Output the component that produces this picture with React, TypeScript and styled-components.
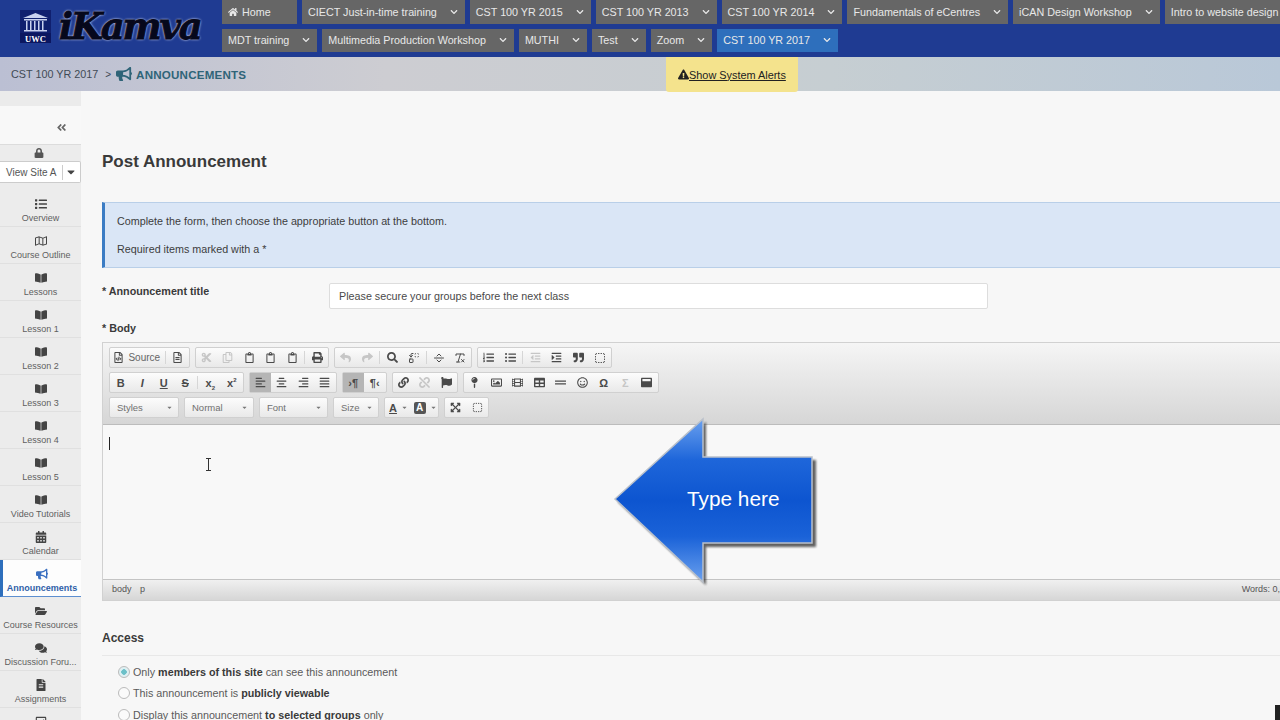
import React from 'react';
import styled, { createGlobalStyle } from 'styled-components';
import {
  FaAlignCenter, FaAlignJustify, FaAlignLeft, FaAlignRight, FaAngleDoubleLeft, FaBookOpen, FaBullhorn,
  FaCalendarAlt, FaCaretDown, FaChevronDown, FaComments, FaExclamationTriangle, FaExpandArrowsAlt, FaFileAlt,
  FaFilm, FaFlag, FaFolderOpen, FaHome, FaLink, FaList, FaListOl, FaListUl, FaLock, FaMapPin, FaOutdent, FaIndent,
  FaPrint, FaQuoteRight, FaRegCheckSquare, FaRegClipboard, FaRegCopy, FaRegFileAlt, FaRegFileCode, FaRegImage, FaRegMap, FaRegSmile,
  FaReply, FaSearch, FaShare, FaCut, FaTable, FaUnlink, FaGripLines, FaWindowMaximize,
} from 'react-icons/fa';
import { Replace, RemoveFormatting, SeparatorHorizontal, SquareDashed } from 'lucide-react';

const GlobalStyle = createGlobalStyle`
  html, body {
    margin: 0;
    height: 720px;
    overflow: hidden;
    background: #f7f7f7;
    font-family: "Liberation Sans", Arial, sans-serif;
    color: #333;
  }
  * { box-sizing: border-box; }
`;

const Page = styled.div`
  position: relative;
  width: 1280px;
  height: 720px;
  overflow: hidden;
`;

/* header */
const Header = styled.header`
  display: flex;
  height: 57px;
  background: #1f3b92;
`;

const Logo = styled.div`
  display: flex;
  align-items: flex-start;
  flex: 0 0 222px;
  padding: 10px 0 0 20px;
`;

const LogoText = styled.span`
  margin: -6px 0 0 8px;
  font: italic 700 37px/44px "DejaVu Serif", serif;
  letter-spacing: -2.2px;
  color: #06081c;
  -webkit-text-stroke: 1px #06081c;
  text-shadow: 0 0 2px #fff, 0 0 3px #cfd8ff;
`;

const Tabs = styled.nav`
  display: flex;
  flex-direction: column;
  gap: 5px;
  min-width: 0;
  flex: 1;
  overflow: hidden;
`;

const TabRow = styled.div<{ $h: number }>`
  display: flex;
  gap: 5px;
  height: ${(p) => p.$h}px;
`;

const Tab = styled.a<{ $active?: boolean; $wide?: number }>`
  display: flex;
  align-items: center;
  flex: 0 0 auto;
  height: 100%;
  padding: 0 6px 1px;
  min-width: ${(p) => p.$wide ?? 0}px;
  background: ${(p) => (p.$active ? '#2e6fbc' : '#666')};
  color: #e8e8e8;
  font-size: 10.75px;
  white-space: nowrap;

  svg.home {
    margin: 0 4px 0 0;
    font-size: 10px;
  }
  svg.chev {
    margin: 0 1px 0 13px;
    font-size: 8px;
  }
`;

/* breadcrumb */
const Crumbs = styled.div`
  position: relative;
  display: flex;
  align-items: center;
  height: 34px;
  padding-left: 11px;
  background: linear-gradient(90deg, #bbbfd3 0%, #cdcdd2 30%, #c6ced2 65%, #b9c8d8 100%);
  font-size: 10.8px;
  color: #3f4a55;
`;

const CrumbSep = styled.span`
  margin: 0 5px 0 7px;
  font-size: 10px;
`;

const CrumbCurrent = styled.span`
  display: flex;
  align-items: center;
  gap: 4px;
  font-weight: 700;
  font-size: 11.6px;
  letter-spacing: 0.2px;
  color: #2f6478;
  svg { font-size: 16px; }
`;

const AlertTab = styled.a`
  position: absolute;
  left: 666px;
  top: 0;
  display: flex;
  align-items: center;
  width: 132px;
  height: 35px;
  padding-left: 12px;
  background: #f4e38d;
  border-radius: 0 0 3px 3px;
  color: #222;
  font-size: 10.9px;
  text-decoration: underline;
  svg { font-size: 11px; }
`;

/* body */
const Body = styled.div`
  display: flex;
  height: 629px;
`;

const Sidebar = styled.aside`
  flex: 0 0 81px;
  background: #ececec;
  overflow: hidden;
`;

const SideTop = styled.div`
  height: 15px;
  background: #ebebeb;
`;

const Collapse = styled.div`
  display: flex;
  align-items: center;
  justify-content: flex-end;
  height: 39px;
  padding: 4px 14px 0 0;
  background: #f8f8f8;
  border-bottom: 1px solid #dcdcdc;
  color: #666;
  font-size: 11px;
`;

const LockRow = styled.div`
  display: flex;
  justify-content: center;
  padding: 3px 4px 0 0;
  height: 16px;
  color: #555;
  font-size: 10px;
`;

const ViewAs = styled.div`
  display: flex;
  align-items: center;
  height: 22px;
  margin-bottom: 7px;
  padding-left: 6px;
  background: #fff;
  border: 1px solid #ccc;
  border-left: 0;
  border-radius: 0 2px 2px 0;
  font-size: 10px;
  color: #555;
  white-space: nowrap;
`;

const ViewCaret = styled.span`
  display: flex;
  align-items: center;
  justify-content: center;
  width: 17px;
  height: 15px;
  margin-left: 6px;
  border-left: 1px solid #ccc;
  color: #444;
  font-size: 12px;
`;

const SideItem = styled.a<{ $active?: boolean }>`
  display: flex;
  flex-direction: column;
  align-items: center;
  height: 37px;
  padding-top: 8px;
  background: ${(p) => (p.$active ? '#fdfdfd' : 'transparent')};
  border-left: ${(p) => (p.$active ? '3px solid #2e6fbc' : '0')};
  border-bottom: 1px solid ${(p) => (p.$active ? '#5d8fd0' : '#e0e0e0')};
  color: ${(p) => (p.$active ? '#2f5fa8' : '#5f5f5f')};
  font-size: 9px;
  font-weight: ${(p) => (p.$active ? 700 : 400)};
  white-space: nowrap;

  svg {
    font-size: 12px;
    height: 12px;
    color: ${(p) => (p.$active ? '#3a6fc0' : '#444')};
    margin-bottom: 3px;
  }
`;

const Main = styled.main`
  flex: 1;
  min-width: 0;
  padding: 61px 0 0 21px;
  background: #f7f7f7;
`;

const Title = styled.h1`
  margin: 0 0 30px;
  font-size: 17px;
  line-height: 20px;
  font-weight: 700;
  color: #3a3a3a;
`;

const Notice = styled.div`
  height: 66px;
  margin-bottom: 15px;
  padding: 12px 0 0 12px;
  background: #dae6f6;
  border: 1px solid #b9cfe8;
  border-left: 3px solid #3b7cc4;
  border-right: 0;
  font-size: 10.75px;
  color: #3d3d3d;

  p {
    margin: 0 0 15px;
    line-height: 13px;
  }
`;

const FieldRow = styled.div`
  display: flex;
  align-items: flex-start;
  height: 26px;
`;

const Label = styled.label`
  flex: 0 0 227px;
  padding-top: 2px;
  font-size: 10.75px;
  font-weight: 700;
  color: #3a3a3a;
`;

const TextInput = styled.div`
  width: 659px;
  height: 26px;
  padding: 0 9px;
  background: #fff;
  border: 1px solid #ddd;
  border-radius: 2px;
  font-size: 10.75px;
  line-height: 25px;
  color: #4a4a4a;
`;

const BodyLabel = styled(Label)`
  display: block;
  height: 33px;
  padding-top: 13px;
`;

const Editor = styled.div`
  border: 1px solid #d1d1d1;
  border-right: 0;
  background: #f8f8f8;
`;

const Toolbar = styled.div`
  height: 82px;
  padding: 4px 0 0 6px;
  background: linear-gradient(#f5f5f5, #d6d6d6);
  border-bottom: 1px solid #bcbcbc;
`;

const ToolRow = styled.div`
  display: flex;
  gap: 5px;
  height: 21px;
  margin-bottom: 4px;
`;

const ToolGroup = styled.div`
  display: flex;
  align-items: stretch;
  background: linear-gradient(#fcfcfc, #e9e9e9);
  border: 1px solid #d0d0d0;
  border-radius: 2px;
`;

const ToolBtn = styled.span<{ $on?: boolean; $off?: boolean; $w?: number }>`
  display: flex;
  align-items: center;
  justify-content: center;
  width: ${(p) => p.$w ?? 21.5}px;
  gap: 4px;
  background: ${(p) => (p.$on ? '#b5b5b5' : 'transparent')};
  color: ${(p) => (p.$off ? '#c6c6c6' : '#4a4a4a')};
  font-size: 11px;
  font-family: "Liberation Sans", Arial, sans-serif;

  sub, sup { font-size: 6px; line-height: 0; }
`;

const BtnLabel = styled.span`
  font-size: 10px;
  color: #666;
`;

const BtnCaret = styled.span`
  display: flex;
  font-size: 7px;
  color: #777;
`;

const HighlightA = styled.b`
  display: flex;
  align-items: center;
  justify-content: center;
  width: 12px;
  height: 12px;
  border-radius: 2px;
  background: #555;
  color: #fff;
  font-size: 10px;
`;

const ToolSep = styled.span`
  width: 1px;
  margin: 3px 1.25px;
  background: #d6d6d6;
`;

const Combo = styled.span<{ $w: number }>`
  display: flex;
  align-items: center;
  justify-content: space-between;
  width: ${(p) => p.$w}px;
  padding: 0 5px 0 7px;
  color: #707070;
  font-size: 9.5px;

  svg { font-size: 7px; color: #777; }
`;

const EditArea = styled.div`
  height: 154px;
  padding: 12px 6px;
  background: #f8f8f8;
`;

const Caret = styled.div`
  width: 1px;
  height: 13px;
  background: #222;
`;

const StatusBar = styled.div`
  display: flex;
  align-items: center;
  justify-content: space-between;
  height: 21px;
  padding: 0 0 2px 9px;
  background: linear-gradient(#f0f0f0, #d6d6d6);
  border-top: 1px solid #c4c4c4;
  font-size: 9px;
  color: #555;
`;

const Path = styled.span`
  word-spacing: 6px;
`;

const SectionHead = styled.h2`
  margin: 30px 0 0;
  padding: 0 0 10px;
  font-size: 12px;
  line-height: 14px;
  font-weight: 700;
  color: #3a3a3a;
  border-bottom: 1px solid #e8e8e8;
`;

const Choices = styled.div`
  display: flex;
  flex-direction: column;
  gap: 8.5px;
  padding: 9px 0 0 16px;
`;

const Choice = styled.div`
  display: flex;
  align-items: center;
  gap: 3px;
  height: 13px;
  font-size: 10.75px;
  color: #5a5a5a;

  b { color: #3a3a3a; }
`;

const Radio = styled.span<{ $on?: boolean }>`
  width: 12px;
  height: 12px;
  border-radius: 50%;
  border: 1px solid #bbb;
  background: ${(p) => (p.$on ? 'radial-gradient(#6cc0c8 0 2.5px, #dff0f3 3px)' : '#fafafa')};
`;

/* things over the page */
const Callout = styled.div`
  position: absolute;
  left: 610px;
  top: 414px;
  width: 212px;
  height: 176px;
`;

const CalloutText = styled.span`
  position: absolute;
  left: 77px;
  top: 73px;
  color: #fff;
  font-size: 20.8px;
  line-height: 24px;
`;

const MouseBeam = styled.svg`
  position: absolute;
  left: 205px;
  top: 458px;
`;

const BlackCorner = styled.div`
  position: absolute;
  right: 0;
  bottom: 0;
  width: 5px;
  height: 15px;
  background: #222;
`;

const tabsTop = [
  'CIECT Just-in-time training',
  'CST 100 YR 2015',
  'CST 100 YR 2013',
  'CST 100 YR 2014',
  'Fundamentals of eCentres',
  'iCAN Design Workshop',
];
const tabsBottom = ['MDT training', 'Multimedia Production Workshop', 'MUTHI', 'Test', 'Zoom'];

const sideItems: [string, React.ReactNode][] = [
  ['Overview', <FaList />],
  ['Course Outline', <FaRegMap />],
  ['Lessons', <FaBookOpen />],
  ['Lesson 1', <FaBookOpen />],
  ['Lesson 2', <FaBookOpen />],
  ['Lesson 3', <FaBookOpen />],
  ['Lesson 4', <FaBookOpen />],
  ['Lesson 5', <FaBookOpen />],
  ['Video Tutorials', <FaBookOpen />],
  ['Calendar', <FaCalendarAlt />],
  ['Announcements', <FaBullhorn />],
  ['Course Resources', <FaFolderOpen />],
  ['Discussion Foru...', <FaComments />],
  ['Assignments', <FaFileAlt />],
  ['Tests', <FaRegCheckSquare />],
];

const Crest = () => (
  <svg width="31" height="33" viewBox="0 0 31 33">
    <rect width="31" height="33" fill="#10206f" />
    <path d="M3 8 L15.5 3 L28 8 Z" fill="#c9d2ef" />
    <path d="M4 9h23v1.5H4zM4 20h23v1.5H4zM6 11h1.5v9H6zM10 11h1.5v9H10zM14 11h1.5v9H14zM18 11h1.5v9H18zM22 11h1.5v9H22z" fill="#c9d2ef" />
    <rect y="23" width="31" height="10" fill="#0b1760" />
    <text x="15.5" y="31.5" textAnchor="middle" fontSize="8.5" fontWeight="700" fontFamily="Liberation Serif, serif" fill="#fff">UWC</text>
  </svg>
);

const Arrow = () => (
  <svg width="212" height="176" viewBox="0 0 212 176">
    <defs>
      <linearGradient id="arrowFill" x1="0" y1="0" x2="0" y2="1">
        <stop offset="0" stopColor="#6aa0ee" />
        <stop offset="0.25" stopColor="#1e66da" />
        <stop offset="0.5" stopColor="#0d55d0" />
        <stop offset="0.72" stopColor="#1a62d8" />
        <stop offset="1" stopColor="#6aa0ee" />
      </linearGradient>
      <filter id="arrowBlur">
        <feGaussianBlur stdDeviation="1.2" />
      </filter>
    </defs>
    <path d="M8 88 L96 8 V46 H206 V133 H96 V171 Z" fill="#222" opacity="0.7" filter="url(#arrowBlur)" />
    <path d="M5 85 L93 5 V43 H202 V129 H93 V168 Z" fill="url(#arrowFill)" stroke="#b9c0ca" strokeWidth="1.5" />
  </svg>
);

const App: React.FC = () => {
  return (
    <Page>
      <GlobalStyle />
      <Header>
        <Logo>
          <Crest />
          <LogoText>iKamva</LogoText>
        </Logo>
        <Tabs>
          <TabRow $h={24}>
            <Tab $wide={75}><FaHome className="home" />Home</Tab>
            {tabsTop.map((t) => (
              <Tab key={t}>{t}<FaChevronDown className="chev" /></Tab>
            ))}
            <Tab>Intro to website design<FaChevronDown className="chev" /></Tab>
          </TabRow>
          <TabRow $h={23}>
            {tabsBottom.map((t) => (
              <Tab key={t}>{t}<FaChevronDown className="chev" /></Tab>
            ))}
            <Tab $active>CST 100 YR 2017<FaChevronDown className="chev" /></Tab>
          </TabRow>
        </Tabs>
      </Header>
      <Crumbs>
        CST 100 YR 2017
        <CrumbSep>&gt;</CrumbSep>
        <CrumbCurrent><FaBullhorn />ANNOUNCEMENTS</CrumbCurrent>
        <AlertTab><FaExclamationTriangle />Show System Alerts</AlertTab>
      </Crumbs>
      <Body>
        <Sidebar>
          <SideTop />
          <Collapse><FaAngleDoubleLeft /></Collapse>
          <LockRow><FaLock /></LockRow>
          <ViewAs>View Site A<ViewCaret><FaCaretDown /></ViewCaret></ViewAs>
          {sideItems.map(([name, icon]) => (
            <SideItem key={name} $active={name === 'Announcements'}>{icon}{name}</SideItem>
          ))}
        </Sidebar>
        <Main>
          <Title>Post Announcement</Title>
          <Notice>
            <p>Complete the form, then choose the appropriate button at the bottom.</p>
            <p>Required items marked with a *</p>
          </Notice>
          <FieldRow>
            <Label>* Announcement title</Label>
            <TextInput>Please secure your groups before the next class</TextInput>
          </FieldRow>
          <BodyLabel>* Body</BodyLabel>
          <Editor>
            <Toolbar>
              <ToolRow>
                <ToolGroup>
                  <ToolBtn $w={53.5}><FaRegFileCode /><BtnLabel>Source</BtnLabel></ToolBtn>
                  <ToolSep />
                  <ToolBtn><FaRegFileAlt /></ToolBtn>
                </ToolGroup>
                <ToolGroup>
                  <ToolBtn $off><FaCut /></ToolBtn>
                  <ToolBtn $off><FaRegCopy /></ToolBtn>
                  <ToolBtn><FaRegClipboard /></ToolBtn>
                  <ToolBtn><FaRegClipboard /></ToolBtn>
                  <ToolBtn><FaRegClipboard /></ToolBtn>
                  <ToolSep />
                  <ToolBtn><FaPrint /></ToolBtn>
                </ToolGroup>
                <ToolGroup>
                  <ToolBtn $off><FaReply /></ToolBtn>
                  <ToolBtn $off><FaShare /></ToolBtn>
                  <ToolSep />
                  <ToolBtn><FaSearch /></ToolBtn>
                  <ToolBtn><Replace size={12} /></ToolBtn>
                  <ToolSep />
                  <ToolBtn><SeparatorHorizontal size={12} /></ToolBtn>
                  <ToolBtn><RemoveFormatting size={12} /></ToolBtn>
                </ToolGroup>
                <ToolGroup>
                  <ToolBtn><FaListOl /></ToolBtn>
                  <ToolBtn><FaListUl /></ToolBtn>
                  <ToolSep />
                  <ToolBtn $off><FaOutdent /></ToolBtn>
                  <ToolBtn><FaIndent /></ToolBtn>
                  <ToolBtn><FaQuoteRight /></ToolBtn>
                  <ToolBtn><SquareDashed size={12} /></ToolBtn>
                </ToolGroup>
              </ToolRow>
              <ToolRow>
                <ToolGroup>
                  <ToolBtn><b>B</b></ToolBtn>
                  <ToolBtn><i><b>I</b></i></ToolBtn>
                  <ToolBtn><u><b>U</b></u></ToolBtn>
                  <ToolBtn><s><b>S</b></s></ToolBtn>
                  <ToolSep />
                  <ToolBtn><b>x<sub>2</sub></b></ToolBtn>
                  <ToolBtn><b>x<sup>2</sup></b></ToolBtn>
                </ToolGroup>
                <ToolGroup>
                  <ToolBtn $on><FaAlignLeft /></ToolBtn>
                  <ToolBtn><FaAlignCenter /></ToolBtn>
                  <ToolBtn><FaAlignRight /></ToolBtn>
                  <ToolBtn><FaAlignJustify /></ToolBtn>
                </ToolGroup>
                <ToolGroup>
                  <ToolBtn $on><b>›¶</b></ToolBtn>
                  <ToolBtn><b>¶‹</b></ToolBtn>
                </ToolGroup>
                <ToolGroup>
                  <ToolBtn><FaLink /></ToolBtn>
                  <ToolBtn $off><FaUnlink /></ToolBtn>
                  <ToolBtn><FaFlag /></ToolBtn>
                </ToolGroup>
                <ToolGroup>
                  <ToolBtn><FaMapPin /></ToolBtn>
                  <ToolBtn><FaRegImage /></ToolBtn>
                  <ToolBtn><FaFilm /></ToolBtn>
                  <ToolBtn><FaTable /></ToolBtn>
                  <ToolBtn><FaGripLines /></ToolBtn>
                  <ToolBtn><FaRegSmile /></ToolBtn>
                  <ToolBtn><b>Ω</b></ToolBtn>
                  <ToolBtn $off><b>Σ</b></ToolBtn>
                  <ToolBtn><FaWindowMaximize /></ToolBtn>
                </ToolGroup>
              </ToolRow>
              <ToolRow>
                <ToolGroup><Combo $w={68}>Styles<FaCaretDown /></Combo></ToolGroup>
                <ToolGroup><Combo $w={68}>Normal<FaCaretDown /></Combo></ToolGroup>
                <ToolGroup><Combo $w={67}>Font<FaCaretDown /></Combo></ToolGroup>
                <ToolGroup><Combo $w={44}>Size<FaCaretDown /></Combo></ToolGroup>
                <ToolGroup>
                  <ToolBtn $w={27}><u><b>A</b></u><BtnCaret><FaCaretDown /></BtnCaret></ToolBtn>
                  <ToolBtn $w={26}><HighlightA>A</HighlightA><BtnCaret><FaCaretDown /></BtnCaret></ToolBtn>
                </ToolGroup>
                <ToolGroup>
                  <ToolBtn><FaExpandArrowsAlt /></ToolBtn>
                  <ToolBtn><SquareDashed size={11} /></ToolBtn>
                </ToolGroup>
              </ToolRow>
            </Toolbar>
            <EditArea><Caret /></EditArea>
            <StatusBar>
              <Path>body p</Path>
              <span>Words: 0,</span>
            </StatusBar>
          </Editor>
          <SectionHead>Access</SectionHead>
          <Choices>
            <Choice><Radio $on />Only <b>members of this site</b> can see this announcement</Choice>
            <Choice><Radio />This announcement is <b>publicly viewable</b></Choice>
            <Choice><Radio />Display this announcement <b>to selected groups</b> only</Choice>
          </Choices>
        </Main>
      </Body>
      <Callout>
        <Arrow />
        <CalloutText>Type here</CalloutText>
      </Callout>
      <MouseBeam width="7" height="13" viewBox="0 0 7 13">
        <path d="M1 .5h5M1 12.5h5M3.5 1v11" stroke="#333" fill="none" />
      </MouseBeam>
      <BlackCorner />
    </Page>
  );
};

export default App;
